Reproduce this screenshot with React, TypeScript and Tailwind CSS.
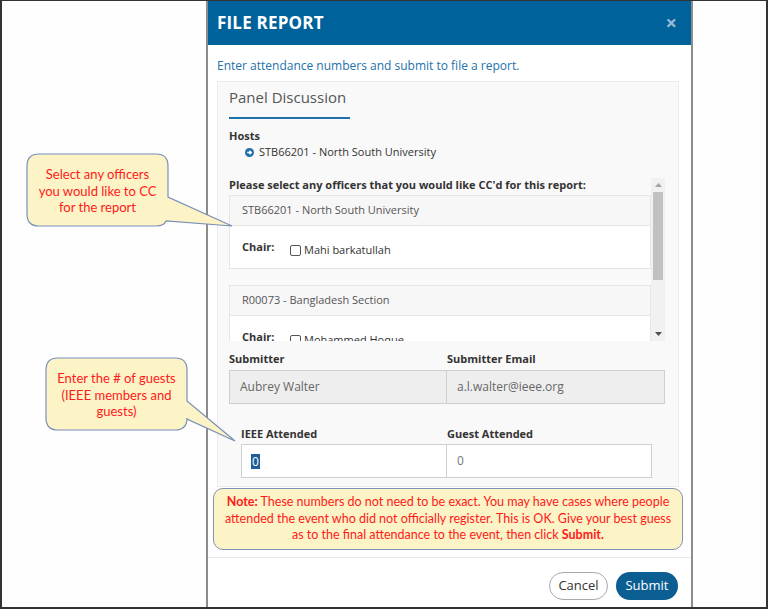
import React from "react";

const F = { fontFamily: '"Open Sans", "Liberation Sans", sans-serif' };
const C = { fontFamily: 'Lato, "Open Sans", sans-serif' };

function Scrollbar() {
  return (
    <div className="w-[14px] h-full bg-[#f1f1f1] flex flex-col items-center">
      <div className="h-[14px] flex items-center justify-center">
        <svg width="7" height="4" viewBox="0 0 7 4"><path d="M0 4 L3.5 0 L7 4 Z" fill="#a3a3a3" /></svg>
      </div>
      <div className="w-[10px] h-[88px] bg-[#c1c1c1]" />
      <div className="flex-1" />
      <div className="h-[14px] flex items-center justify-center">
        <svg width="7" height="4" viewBox="0 0 7 4"><path d="M0 0 L3.5 4 L7 0 Z" fill="#505050" /></svg>
      </div>
    </div>
  );
}

function Card({ title, name }: { title: string; name: string }) {
  return (
    <div className="border border-[#e6e6e6] bg-white">
      <div className="h-[30px] bg-[#f7f7f7] border-b border-[#e6e6e6] px-[12px] flex items-center text-[11px] text-[#555]">
        {title}
      </div>
      <div className="h-[42px] px-[12px] flex items-start pt-[13px]">
        <span className="text-[11px] font-bold text-[#333] w-[48px]">Chair:</span>
        <span className="mt-[3px] flex items-center text-[11px] text-[#333]">
          <span className="w-[11px] h-[11px] border border-[#555] rounded-[2px] bg-white mr-[3px]" />
          {name}
        </span>
      </div>
    </div>
  );
}

export default function App() {
  return (
    <div className="relative w-[768px] h-[609px] bg-[#fefefe] border-t border-l-2 border-r-2 border-b-2 border-[#333] overflow-hidden" style={F}>
      <div className="ml-[204px] w-[487px] h-full border-x-2 border-[#8c8c8c] bg-white flex flex-col">
        <div className="h-[44px] bg-[#00629b] flex items-center justify-between pl-[9px] pr-[14px] shrink-0">
          <span className="text-white font-bold text-[17px] tracking-[0.2px]">FILE REPORT</span>
          <span className="text-[#9fb9d3] font-bold text-[20px] leading-none">×</span>
        </div>
        <div className="pl-[9px] pr-[12px]">
          <div className="mt-[13px] text-[12px] leading-[16px] text-[#2272aa]">
            Enter attendance numbers and submit to file a report.
          </div>
          <div className="mt-[7px] h-[406px] bg-[#f9f9f9] border border-[#ececec] px-[11px]">
            <div className="pt-[5px] text-[15px] leading-[20px] text-[#555]">Panel Discussion</div>
            <div className="mt-[10px] w-[121px] h-[2px] bg-[#1f6fa8]" />
            <div className="mt-[10px] text-[11px] leading-[14px] font-bold text-[#333]">Hosts</div>
            <div className="mt-[2px] ml-[16px] flex items-center text-[11px] leading-[14px] text-[#333]">
              <svg width="9" height="9" viewBox="0 0 10 10" className="mr-[5px]">
                <circle cx="5" cy="5" r="5" fill="#1f6fa8" />
                <path d="M2.5 5 H7 M5 3 L7 5 L5 7" stroke="#fff" strokeWidth="1.6" fill="none" />
              </svg>
              STB66201 - North South University
            </div>
            <div className="mt-[19px] h-[163px] flex overflow-hidden">
              <div className="w-[422px] flex flex-col">
                <div className="text-[11px] leading-[14px] font-bold text-[#333]">
                  Please select any officers that you would like CC'd for this report:
                </div>
                <div className="mt-[3px]">
                  <Card title="STB66201 - North South University" name="Mahi barkatullah" />
                </div>
                <div className="mt-[16px]">
                  <Card title="R00073 - Bangladesh Section" name="Mohammed Hoque" />
                </div>
              </div>
              <Scrollbar />
            </div>
            <div className="grid grid-cols-2 w-[436px] mt-[11px]">
              <div className="text-[11px] leading-[14px] font-bold text-[#333]">Submitter</div>
              <div className="text-[11px] leading-[14px] font-bold text-[#333]">Submitter Email</div>
              <div className="mt-[4px] h-[34px] bg-[#eeeeee] border border-[#cfcfcf] flex items-center px-[10px] text-[12px] text-[#666]">Aubrey Walter</div>
              <div className="mt-[4px] h-[34px] bg-[#eeeeee] border border-l-0 border-[#cfcfcf] flex items-center px-[10px] text-[12px] text-[#666]">a.l.walter@ieee.org</div>
            </div>
            <div className="grid grid-cols-[206px_205px] ml-[12px] mt-[23px]">
              <div className="text-[11px] leading-[14px] font-bold text-[#333]">IEEE Attended</div>
              <div className="text-[11px] leading-[14px] font-bold text-[#333]">Guest Attended</div>
              <div className="mt-[3px] h-[34px] bg-white border border-[#cfcfcf] flex items-center px-[9px] text-[12px]">
                <span className="bg-[#1f5f99] text-white px-[1px] leading-[15px]">0</span>
              </div>
              <div className="mt-[3px] h-[34px] bg-white border border-l-0 border-[#cfcfcf] flex items-center px-[10px] text-[12px] text-[#777]">0</div>
            </div>
          </div>
        </div>
        <div className="ml-[5px] mr-[8px] mt-[1px] h-[62px] bg-[#fcf3c7] border border-[#7f93b5] rounded-[10px] flex items-center justify-center text-center text-[12.5px] leading-[16.5px] text-[#ff1a1a] px-[6px]" style={C}>
          <span>
            <b>Note:</b> These numbers do not need to be exact. You may have cases where people attended the event who did not officially register. This is OK. Give your best guess as to the final attendance to the event, then click <b>Submit.</b>
          </span>
        </div>
        <div className="mt-[7px] border-t border-[#e8e8e8] flex justify-end gap-[8px] pr-[13px] pt-[14px]">
          <button className="h-[28px] w-[59px] rounded-full border border-[#aaa] bg-white text-[13px] text-[#333]">Cancel</button>
          <button className="h-[28px] w-[62px] rounded-full bg-[#0a5e92] text-white text-[13px]">Submit</button>
        </div>
      </div>

      {/* Callout 1 */}
      <div className="absolute left-[18px] top-[147px] w-[220px] h-[85px]">
        <svg width="220" height="85" viewBox="0 0 220 85" className="absolute inset-0">
          <path d="M19 6 H136 Q148 6 148 18 V49 L212 78 L146 73 Q144 78 136 78 H19 Q7 78 7 66 V18 Q7 6 19 6 Z" fill="#fcf3c7" stroke="#7990b8" strokeWidth="1.2" />
        </svg>
        <div className="absolute left-[7px] top-[7px] w-[141px] h-[72px] flex items-center justify-center text-center text-[13px] leading-[16.5px] text-[#ff1a1a]" style={C}>
          Select any officers<br />you would like to CC<br />for the report
        </div>
      </div>

      {/* Callout 2 */}
      <div className="absolute left-[38px] top-[350px] w-[200px] h-[95px]">
        <svg width="200" height="95" viewBox="0 0 200 95" className="absolute inset-0">
          <path d="M18 7 H135 Q147 7 147 19 V50 L195 90 L147 68 V67 Q147 79 135 79 H18 Q6 79 6 67 V19 Q6 7 18 7 Z" fill="#fcf3c7" stroke="#7990b8" strokeWidth="1.2" />
        </svg>
        <div className="absolute left-[6px] top-[8px] w-[141px] h-[72px] flex items-center justify-center text-center text-[13px] leading-[16.5px] text-[#ff1a1a]" style={C}>
          Enter the # of guests<br />(IEEE members and<br />guests)
        </div>
      </div>
    </div>
  );
}
